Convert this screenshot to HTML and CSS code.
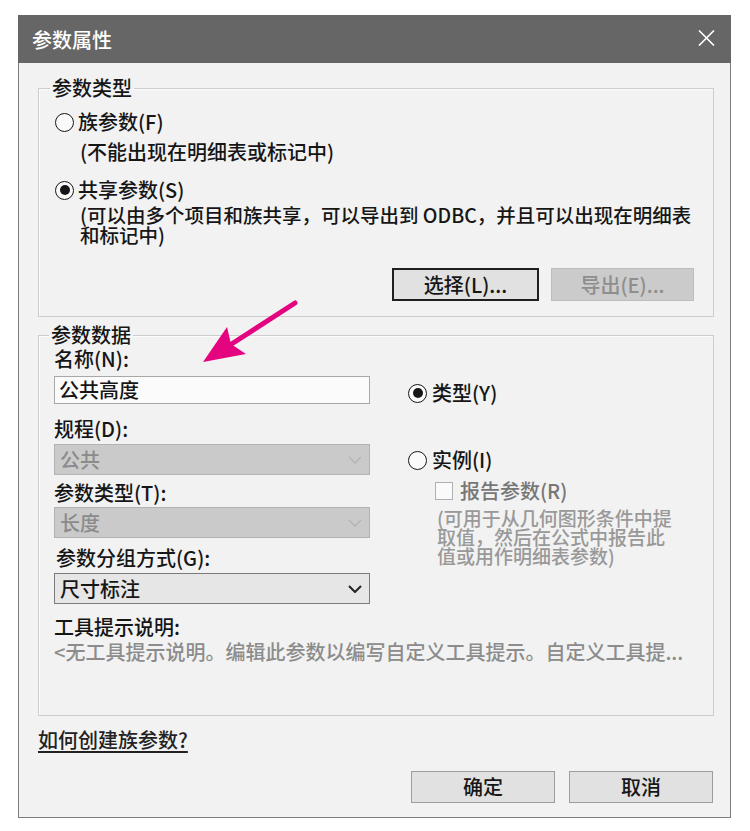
FILE: index.html
```html
<!DOCTYPE html>
<html lang="zh-CN">
<head>
<meta charset="utf-8">
<title>参数属性</title>
<link rel="stylesheet" href="styles.css">
</head>
<body>
<div class="dialog">
  <div class="titlebar">
    <span class="title">参数属性</span>
    <svg class="close" width="17" height="16" viewBox="0 0 17 16"><path d="M1 0.5 L16 15.5 M16 0.5 L1 15.5" stroke="#fff" stroke-width="1.6" fill="none"/></svg>
  </div>
  <div class="content">
    <fieldset class="group group-type">
      <legend>参数类型</legend>
      <div class="radio-row"><span class="radio"></span><span>族参数(F)</span></div>
      <p class="note note-family">(不能出现在明细表或标记中)</p>
      <div class="radio-row shared"><span class="radio checked"></span><span>共享参数(S)</span></div>
      <p class="note note-shared">(可以由多个项目和族共享，可以导出到 ODBC，并且可以出现在明细表<br>和标记中)</p>
      <div class="btn-row">
        <button class="btn btn-default">选择(L)...</button>
        <button class="btn btn-disabled" disabled>导出(E)...</button>
      </div>
    </fieldset>

    <fieldset class="group group-data">
      <legend>参数数据</legend>
      <div class="data-grid">
        <div class="col-left">
          <div class="label">名称(N):</div>
          <div class="input">公共高度</div>
          <div class="label label-discipline">规程(D):</div>
          <div class="select select-disabled"><span>公共</span><svg class="chev" width="14" height="8" viewBox="0 0 14 8"><path d="M1 1 L7 7 L13 1" fill="none" stroke="#b5b5b5" stroke-width="1.5"/></svg></div>
          <div class="label label-type">参数类型(T):</div>
          <div class="select select-disabled select-type"><span>长度</span><svg class="chev" width="14" height="8" viewBox="0 0 14 8"><path d="M1 1 L7 7 L13 1" fill="none" stroke="#b5b5b5" stroke-width="1.5"/></svg></div>
          <div class="label label-group">参数分组方式(G):</div>
          <div class="select select-enabled"><span>尺寸标注</span><svg class="chev" width="14" height="8" viewBox="0 0 14 8"><path d="M1 1 L7 7 L13 1" fill="none" stroke="#222" stroke-width="2"/></svg></div>
        </div>
        <div class="col-right">
          <div class="radio-row type-row"><span class="radio checked"></span><span>类型(Y)</span></div>
          <div class="radio-row instance-row"><span class="radio"></span><span>实例(I)</span></div>
          <div class="check-row"><span class="checkbox"></span><span>报告参数(R)</span></div>
          <p class="hint">(可用于从几何图形条件中提<br>取值，然后在公式中报告此<br>值或用作明细表参数)</p>
        </div>
      </div>
      <div class="label tooltip-label">工具提示说明:</div>
      <div class="tooltip-text">&lt;无工具提示说明。编辑此参数以编写自定义工具提示。自定义工具提...</div>
    </fieldset>

    <a class="help" href="#">如何创建族参数?</a>

    <div class="footer">
      <button class="btn btn-footer">确定</button>
      <button class="btn btn-footer">取消</button>
    </div>
  </div>
</div>

<svg class="arrow" width="750" height="831" viewBox="0 0 750 831">
  <line x1="295" y1="303" x2="230" y2="345" stroke="#e4047f" stroke-width="5" stroke-linecap="round"/>
  <polygon points="203,362 227,327 231,344 246,354" fill="#e4047f"/>
</svg>
</body>
</html>
```

FILE: styles.css
```css
html, body {
  margin: 0;
  padding: 0;
}

body {
  position: relative;
  width: 750px;
  height: 831px;
  background: #ffffff;
  font-family: "Noto Sans CJK SC", "Noto Sans", sans-serif;
  font-size: 20px;
  line-height: 20px;
  font-weight: 500;
  color: #161616;
  overflow: hidden;
}

.dialog {
  box-sizing: border-box;
  width: 713px;
  height: 803px;
  margin: 15px 0 0 18px;
  border: 1px solid #7d7d7d;
  border-top: none;
  background: #f2f2f2;
  display: flex;
  flex-direction: column;
}

.titlebar {
  height: 48px;
  flex: none;
  background: #676666;
  color: #ffffff;
  display: flex;
  align-items: center;
  justify-content: space-between;
  padding: 0 16px 0 14px;
  margin: 0 -1px;
}

.title {
  font-size: 20px;
  line-height: 20px;
  padding-top: 2px;
}

.close {
  display: block;
  margin-top: -2px;
}

.content {
  display: flex;
  flex-direction: column;
  padding: 15px 16px 0 19px;
}

.group {
  margin: 0;
  min-width: 0;
  border: 1px solid #cdcdcd;
  box-shadow: inset 1px 1px 0 #fbfbfb;
}

.group legend {
  padding: 0 2px;
  line-height: 20px;
  font-size: 20px;
  margin-left: -5px;
}

.group-type {
  padding: 14px 19px 15px 16px;
}

.radio-row {
  display: flex;
  align-items: center;
  gap: 4px;
  height: 20px;
}

.radio {
  box-sizing: border-box;
  width: 19px;
  height: 19px;
  border: 1.6px solid #161616;
  border-radius: 50%;
  background: #fafafa;
  display: flex;
  align-items: center;
  justify-content: center;
  flex: none;
}

.radio.checked::after {
  content: "";
  width: 10px;
  height: 10px;
  border-radius: 50%;
  background: #161616;
}

.note {
  margin: 0;
  white-space: nowrap;
}

.note-family {
  margin: 10px 0 0 25px;
}

.radio-row.shared {
  margin-top: 18px;
}

.note-shared {
  margin: 5px 0 0 25px;
  font-size: 19.5px;
}

.btn-row {
  display: flex;
  justify-content: flex-end;
  gap: 12px;
  margin-top: 23px;
}

.btn {
  box-sizing: border-box;
  font-family: inherit;
  font-size: 20px;
  line-height: 20px;
  font-weight: 500;
  padding: 0;
  margin: 0;
  color: #161616;
  background: #e1e1e1;
  border: 1px solid #a3a3a3;
  border-radius: 0;
}

.btn-default {
  width: 147px;
  height: 33px;
  border: 2px solid #1f1f1f;
}

.btn-disabled {
  width: 143px;
  height: 33px;
  background: #cbcbcb;
  border-color: #bdbdbd;
  color: #8e8e8e;
}

.group-data {
  margin-top: 8px;
  padding: 4px 18px 53px 15px;
}

.data-grid {
  display: grid;
  grid-template-columns: 316px 1fr;
  column-gap: 38px;
}

.col-left {
  display: flex;
  flex-direction: column;
}

.label {
  height: 20px;
  line-height: 20px;
  white-space: nowrap;
}

.input {
  box-sizing: border-box;
  height: 28px;
  margin-top: 7px;
  background: #fbfbfb;
  border: 1px solid #a8a8a8;
  padding-left: 4px;
  line-height: 26px;
}

.label-discipline {
  margin-top: 15px;
}

.select {
  box-sizing: border-box;
  height: 31px;
  margin-top: 5px;
  display: flex;
  align-items: center;
  justify-content: space-between;
  padding: 0 7px 0 5px;
}

.select-disabled {
  background: #cacaca;
  border: 1px solid #b3b3b3;
  color: #8b8b8b;
}

.label-type {
  margin-top: 8px;
}

.select-type {
  margin-top: 4px;
}

.label-group {
  margin-top: 10px;
  padding-left: 2px;
}

.select-enabled {
  background: #e6e6e6;
  border: 1px solid #7b7b7b;
  color: #161616;
}

.chev {
  display: block;
}

.col-right {
  display: flex;
  flex-direction: column;
}

.type-row {
  margin-top: 34px;
  gap: 5px;
}

.instance-row {
  margin-top: 47px;
  gap: 5px;
}

.check-row {
  display: flex;
  align-items: center;
  height: 20px;
  margin-top: 11px;
  padding-left: 27px;
  gap: 7px;
  color: #777777;
}

.checkbox {
  box-sizing: border-box;
  width: 18px;
  height: 18px;
  border: 1px solid #b0b0b0;
  background: #fafafa;
  flex: none;
}

.hint {
  margin: 7px 0 0 29px;
  font-size: 19px;
  line-height: 19px;
  color: #999999;
  white-space: nowrap;
}

.tooltip-label {
  margin-top: 13px;
}

.tooltip-text {
  margin-top: 5px;
  color: #8c8c8c;
  white-space: nowrap;
  line-height: 20px;
}

.help {
  align-self: flex-start;
  margin-top: 14px;
  color: #222222;
  text-decoration: underline;
  text-underline-offset: 3px;
  line-height: 20px;
}

.footer {
  display: flex;
  justify-content: flex-end;
  gap: 14px;
  margin-top: 21px;
  padding-right: 1px;
}

.btn-footer {
  width: 144px;
  height: 32px;
  background: #e1e1e1;
  border: 1px solid #9d9d9d;
}

.arrow {
  position: absolute;
  left: 0;
  top: 0;
  pointer-events: none;
}
```
